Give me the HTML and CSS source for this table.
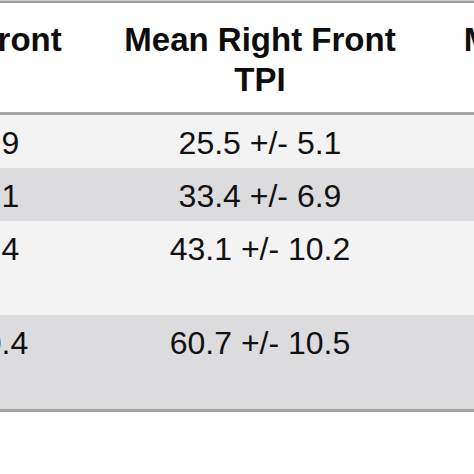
FILE: index.html
```html
<!DOCTYPE html>
<html lang="en">
<head>
<meta charset="utf-8">
<title>Mean TPI table</title>
<link rel="stylesheet" href="styles.css">
</head>
<body>
<div class="frame">
  <table class="tpi">
    <colgroup>
      <col class="col"><col class="col"><col class="col"><col class="col">
    </colgroup>
    <thead>
      <tr>
        <th>Mean Left Front TPI</th>
        <th>Mean Right Front TPI</th>
        <th>Mean Left Rear TPI</th>
        <th>Mean Right Rear TPI</th>
      </tr>
    </thead>
    <tbody>
      <tr class="light">
        <td>24.8 +/- 4.9</td>
        <td>25.5 +/- 5.1</td>
        <td>22.1 +/- 4.6</td>
        <td>22.9 +/- 4.8</td>
      </tr>
      <tr class="dark">
        <td>32.6 +/- 7.1</td>
        <td>33.4 +/- 6.9</td>
        <td>29.7 +/- 6.2</td>
        <td>30.2 +/- 6.5</td>
      </tr>
      <tr class="light">
        <td>42.7 +/- 9.4</td>
        <td>43.1 +/- 10.2</td>
        <td>38.5 +/- 8.8</td>
        <td class="wrap">39.0 +/- 9.1<br>(p &lt; 0.05)</td>
      </tr>
      <tr class="dark">
        <td>59.8 +/- 10.4</td>
        <td>60.7 +/- 10.5</td>
        <td>54.3 +/- 9.7</td>
        <td class="wrap">55.1 +/- 9.9<br>(p &lt; 0.05)</td>
      </tr>
    </tbody>
  </table>
</div>
</body>
</html>
```
FILE: styles.css
```css
html, body {
  margin: 0;
  padding: 0;
  background: #ffffff;
  overflow: hidden;
}

.frame {
  width: 474px;
  height: 474px;
  overflow: hidden;
  border-top: 1px solid #cdcdcd;
  box-sizing: border-box;
}

.tpi {
  margin-left: -223px;
  border-collapse: collapse;
  table-layout: fixed;
  width: 1288px;
  font-family: "Liberation Sans", Arial, Helvetica, sans-serif;
  color: #111111;
  border-top: 2px solid #9c9c9c;
  border-bottom: 3px solid #a3a3a3;
}

.col {
  width: 322px;
}

.tpi th {
  font-size: 33px;
  font-weight: bold;
  line-height: 40px;
  padding: 17px 18px 12px;
  text-align: center;
  vertical-align: top;
  background: #ffffff;
  border-bottom: 3px solid #a3a3a3;
  color: #0d0d0d;
}

.tpi td {
  font-size: 32px;
  line-height: 37px;
  padding: 10px 18px 6px;
  text-align: center;
  vertical-align: top;
}

.tpi td.wrap {
  padding-bottom: 10px;
}

.light {
  background: #f3f3f4;
}

.dark {
  background: #dcdcde;
}
```
